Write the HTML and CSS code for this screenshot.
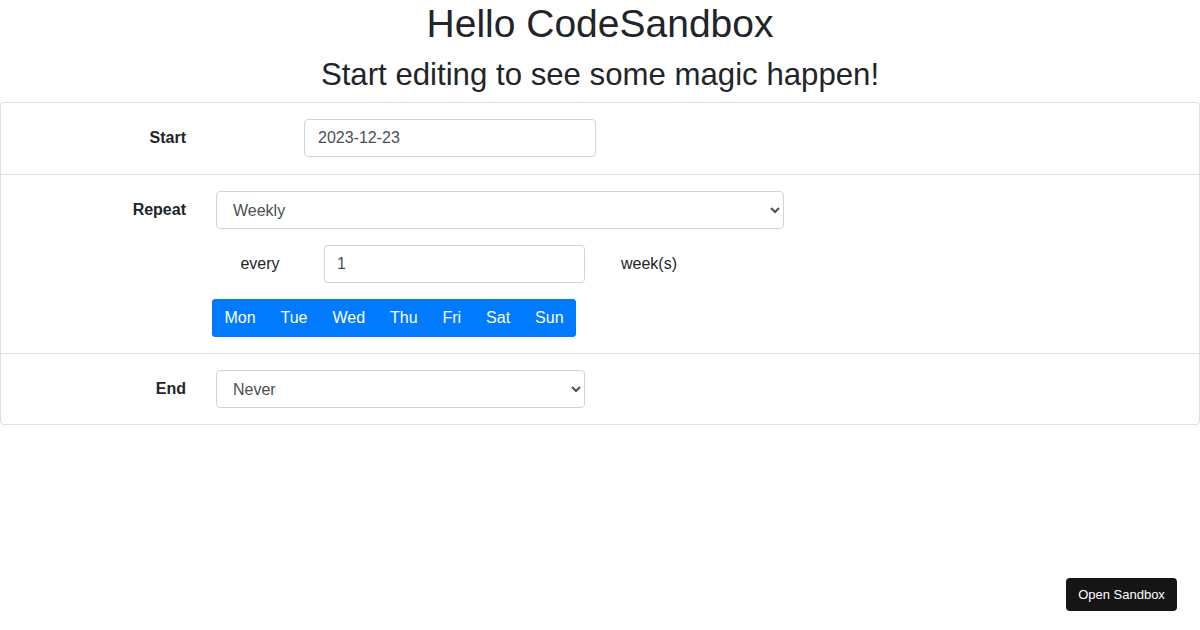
FILE: index.html
```html
<!DOCTYPE html>
<html>
<head>
<meta charset="utf-8">
<link rel="stylesheet" href="styles.css">
</head>
<body>
<div class="app">
  <h1 class="title">Hello CodeSandbox</h1>
  <h2 class="subtitle">Start editing to see some magic happen!</h2>
  <div class="card">
    <div class="section section-first">
      <div class="field">
        <label class="label">Start</label>
        <div class="control control-start">
          <input class="input input-start" type="text" value="2023-12-23">
        </div>
      </div>
    </div>
    <div class="section">
      <div class="field">
        <label class="label">Repeat</label>
        <div class="control">
          <select class="input select select-repeat">
            <option>Weekly</option>
          </select>
        </div>
      </div>
      <div class="subrow">
        <div class="every-label">every</div>
        <input class="input input-every" type="text" value="1">
        <div class="unit">week(s)</div>
      </div>
      <div class="subrow">
        <div class="btn-group">
          <button class="btn">Mon</button><button class="btn">Tue</button><button class="btn">Wed</button><button class="btn">Thu</button><button class="btn">Fri</button><button class="btn">Sat</button><button class="btn">Sun</button>
        </div>
      </div>
    </div>
    <div class="section section-last">
      <div class="field">
        <label class="label">End</label>
        <div class="control">
          <select class="input select select-end">
            <option>Never</option>
          </select>
        </div>
      </div>
    </div>
  </div>
</div>
<button class="open-sandbox">Open Sandbox</button>
</body>
</html>
```

FILE: styles.css
```css
html, body {
  margin: 0;
  padding: 0;
  background: #fff;
}
body {
  font-family: "Liberation Sans", Arial, sans-serif;
  font-size: 16px;
  line-height: 1.5;
  color: #212529;
}
.title {
  margin: 0 0 8px;
  font-size: 39px;
  font-weight: 400;
  line-height: 48px;
  text-align: center;
}
.subtitle {
  margin: 0 0 8px;
  font-size: 31.2px;
  font-weight: 400;
  line-height: 38.4px;
  text-align: center;
}
.card {
  border: 1px solid rgba(0, 0, 0, 0.125);
  border-radius: 4px;
  margin: 0;
}
.section {
  padding: 16px 0;
  border-bottom: 1px solid rgba(0, 0, 0, 0.125);
  display: flex;
  flex-direction: column;
  gap: 16px;
}
.section-first {
  padding-bottom: 17px;
}
.section-last {
  border-bottom: none;
}
.field {
  display: flex;
  align-items: center;
}
.label {
  width: 199px;
  box-sizing: border-box;
  padding: 0 14px 0 15px;
  text-align: right;
  font-weight: 700;
}
.control {
  padding-left: 16px;
}
.control-start {
  padding-left: 104px;
}
.input {
  box-sizing: border-box;
  height: 38px;
  padding: 6px 12px;
  font-family: inherit;
  font-size: 16px;
  line-height: 1.5;
  color: #495057;
  background: #fff;
  border: 1px solid #ced4da;
  border-radius: 4px;
  outline: none;
}
.input-start { width: 292px; padding-left: 13px; }
.select-repeat { width: 568px; }
.select-end { width: 369px; }
.select {
  padding-left: 12px;
}
.subrow {
  display: flex;
  align-items: center;
  padding-left: 213px;
}
.every-label {
  width: 92px;
  text-align: center;
}
.input-every {
  width: 261px;
  margin-left: 18px;
}
.unit {
  margin-left: 36px;
}
.btn-group {
  display: inline-flex;
  margin-left: -2px;
  background: #007bff;
  border-radius: 4px;
  overflow: hidden;
  height: 38px;
  width: 364px;
}
.btn {
  flex: 1 1 auto;
  border: none;
  background: #007bff;
  color: #fff;
  font-family: inherit;
  font-size: 16px;
  line-height: 1.5;
  padding: 6px 12px;
  margin: 0;
  cursor: pointer;
}
.open-sandbox {
  position: fixed;
  right: 23px;
  bottom: 19px;
  width: 111px;
  height: 33px;
  border: none;
  border-radius: 4px;
  background: #151515;
  color: #fff;
  font-family: "Liberation Sans", Arial, sans-serif;
  font-size: 13px;
  padding: 0;
}
```
